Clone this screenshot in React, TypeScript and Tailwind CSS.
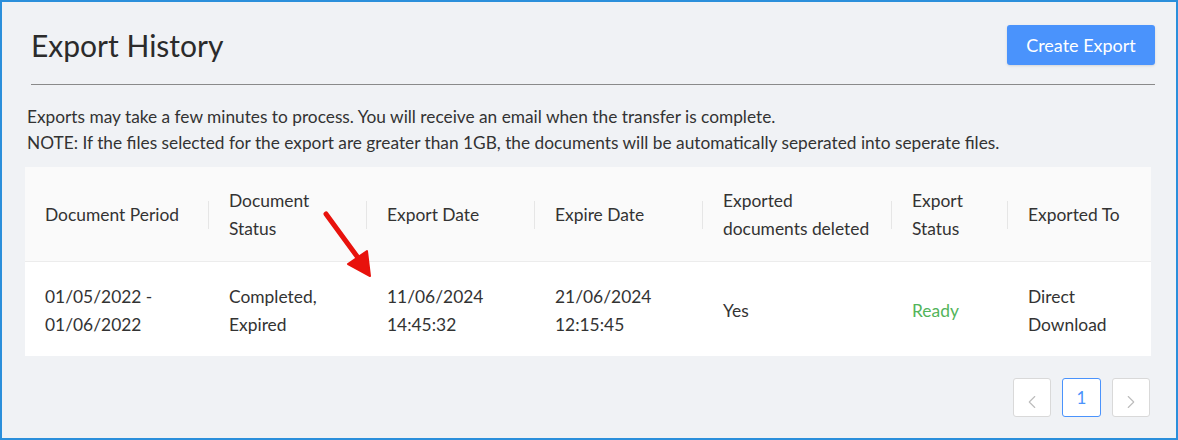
import { ChevronLeft, ChevronRight } from "lucide-react";

const columns = [
  { label: ["Document Period"], width: "w-[184px]" },
  { label: ["Document", "Status"], width: "w-[158px]" },
  { label: ["Export Date"], width: "w-[168px]" },
  { label: ["Expire Date"], width: "w-[168px]" },
  { label: ["Exported", "documents deleted"], width: "w-[189px]" },
  { label: ["Export", "Status"], width: "w-[116px]" },
  { label: ["Exported To"], width: "w-[143px]" },
];

const rows = [
  {
    period: ["01/05/2022 -", "01/06/2022"],
    status: ["Completed,", "Expired"],
    exportDate: ["11/06/2024", "14:45:32"],
    expireDate: ["21/06/2024", "12:15:45"],
    deleted: "Yes",
    exportStatus: "Ready",
    exportedTo: ["Direct", "Download"],
  },
];

function Lines({ lines }: { lines: string[] }) {
  return (
    <>
      {lines.map((l) => (
        <div key={l} className="whitespace-nowrap">
          {l}
        </div>
      ))}
    </>
  );
}

export default function App() {
  return (
    <div
      className="relative w-[1178px] h-[440px] border-2 border-[#2b8fdb] bg-[#f0f2f5] pl-[23px] pr-[25px] text-[#333]"
      style={{ fontFamily: "Lato, 'Open Sans', sans-serif" }}
    >
      {/* header */}
      <div className="ml-1.5 mr-[-4px] pt-[23px]">
        <div className="flex items-center justify-between">
          <h1 className="text-[30px] leading-10 font-normal text-[#2b2b2b]">Export History</h1>
          <button
            type="button"
            className="h-10 w-[148px] rounded-[3px] bg-[#4a93fc] text-[18px] text-white shadow-sm"
          >
            Create Export
          </button>
        </div>
        <div className="mt-[19px] h-px bg-[#8a8a8a]" />
      </div>

      <div className="mt-[19px] pl-0.5 text-[17.3px] leading-[26px]">
        <p>Exports may take a few minutes to process. You will receive an email when the transfer is complete.</p>
        <p>
          NOTE: If the files selected for the export are greater than 1GB, the documents will be automatically
          seperated into seperate files.
        </p>
      </div>

      {/* table */}
      <div className="mt-[11px] text-[17.4px] leading-7">
        <div className="flex h-[95px] items-center bg-[#fafafa] border-b border-[#ececec] pt-px">
          {columns.map((c, i) => (
            <div
              key={c.label.join(" ")}
              className={`${c.width} relative px-5 ${
                i < columns.length - 1
                  ? "after:absolute after:right-0 after:top-1/2 after:h-7 after:w-px after:-translate-y-1/2 after:bg-[#e6e6e6] after:content-['']"
                  : ""
              }`}
            >
              <Lines lines={c.label} />
            </div>
          ))}
        </div>
        {rows.map((r) => (
          <div key={r.period[0]} className="flex h-[94px] items-center bg-white pt-1">
            <div className="w-[184px] px-5">
              <Lines lines={r.period} />
            </div>
            <div className="w-[158px] px-5">
              <Lines lines={r.status} />
            </div>
            <div className="w-[168px] px-5">
              <Lines lines={r.exportDate} />
            </div>
            <div className="w-[168px] px-5">
              <Lines lines={r.expireDate} />
            </div>
            <div className="w-[189px] px-5">{r.deleted}</div>
            <div className="w-[116px] px-5 text-[#52b45a]">{r.exportStatus}</div>
            <div className="w-[143px] px-5">
              <Lines lines={r.exportedTo} />
            </div>
          </div>
        ))}
      </div>

      {/* pagination */}
      <div className="mt-[22px] flex justify-end gap-[11px] pr-px">
        <button
          type="button"
          className="flex h-[39px] w-[38px] items-center justify-center rounded-[3px] border border-[#d9d9d9] bg-white pt-2 text-[#bcbcbc]"
        >
          <ChevronLeft size={22} strokeWidth={1.2} />
        </button>
        <button
          type="button"
          className="flex h-[39px] w-[39px] items-center justify-center rounded-[3px] border border-[#4a93fc] bg-white text-[17px] text-[#4a93fc]"
        >
          1
        </button>
        <button
          type="button"
          className="flex h-[39px] w-[38px] items-center justify-center rounded-[3px] border border-[#d9d9d9] bg-white pt-2 text-[#bcbcbc]"
        >
          <ChevronRight size={22} strokeWidth={1.2} />
        </button>
      </div>

      {/* red annotation arrow */}
      <svg className="pointer-events-none absolute left-[310px] top-[200px]" width="80" height="90" viewBox="0 0 80 90">
        <line x1="14" y1="12" x2="55" y2="68" stroke="#e8120c" strokeWidth="5" strokeLinecap="round" />
        <polygon points="58,74 36,62 55,49" fill="#e8120c" stroke="#e8120c" strokeWidth="2" strokeLinejoin="round" />
      </svg>
    </div>
  );
}
